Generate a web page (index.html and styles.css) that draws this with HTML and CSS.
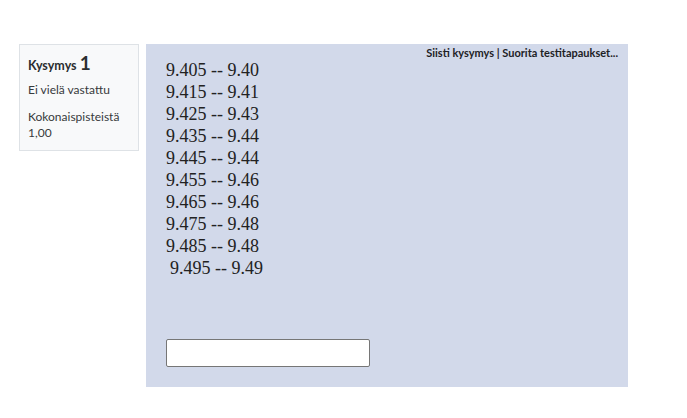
FILE: index.html
```html
<!DOCTYPE html>
<html lang="fi">
<head>
<meta charset="utf-8">
<title>Kysymys 1</title>
<link rel="stylesheet" href="styles.css">
</head>
<body>
<div class="que">
  <div class="info">
    <h3 class="no">Kysymys <span class="qno">1</span></h3>
    <div class="state">Ei vielä vastattu</div>
    <div class="grade">Kokonaispisteistä<br>1,00</div>
  </div>
  <div class="content">
    <div class="tools">Siisti kysymys | Suorita testitapaukset...</div>
    <div class="math">
      <div class="line">9.405 -- 9.40</div>
      <div class="line">9.415 -- 9.41</div>
      <div class="line">9.425 -- 9.43</div>
      <div class="line">9.435 -- 9.44</div>
      <div class="line">9.445 -- 9.44</div>
      <div class="line">9.455 -- 9.46</div>
      <div class="line">9.465 -- 9.46</div>
      <div class="line">9.475 -- 9.48</div>
      <div class="line">9.485 -- 9.48</div>
      <div class="line indent">9.495 -- 9.49</div>
    </div>
    <input class="answer" type="text">
  </div>
</div>
</body>
</html>
```
FILE: styles.css
```css
html, body {
  margin: 0;
  padding: 0;
  background: #ffffff;
}
body {
  font-family: Lato, "Open Sans", sans-serif;
  color: #373a3c;
}
.que {
  display: flex;
  align-items: flex-start;
  gap: 7px;
  padding: 44px 0 0 19px;
}
.info {
  width: 102px;
  padding: 8px 8px 9px 8px;
  background: #f8f9fa;
  border: 1px solid #dee2e6;
  font-size: 12px;
  line-height: 16px;
}
.no {
  margin: 0;
  font-size: 12.5px;
  font-weight: 700;
  line-height: 20px;
  color: #2b2e30;
}
.qno {
  font-size: 19px;
  font-weight: 700;
}
.state {
  margin-top: 6px;
}
.grade {
  margin-top: 11px;
}
.content {
  width: 452px;
  height: 340px;
  padding: 3px 10px 0 20px;
  background: #d2d9ea;
  display: flex;
  flex-direction: column;
}
.tools {
  text-align: right;
  font-size: 11px;
  font-weight: 700;
  line-height: 12px;
  color: #1d2125;
}
.math {
  font-family: "Liberation Serif", "Times New Roman", serif;
  font-size: 18px;
  line-height: 22px;
  color: #222222;
}
.line.indent {
  padding-left: 4px;
}
.answer {
  margin-top: 60px;
  width: 204px;
  height: 28px;
  box-sizing: border-box;
  border: 1px solid #767676;
  border-radius: 2px;
  background: #ffffff;
  padding: 0 4px;
  font-size: 14px;
}
```
